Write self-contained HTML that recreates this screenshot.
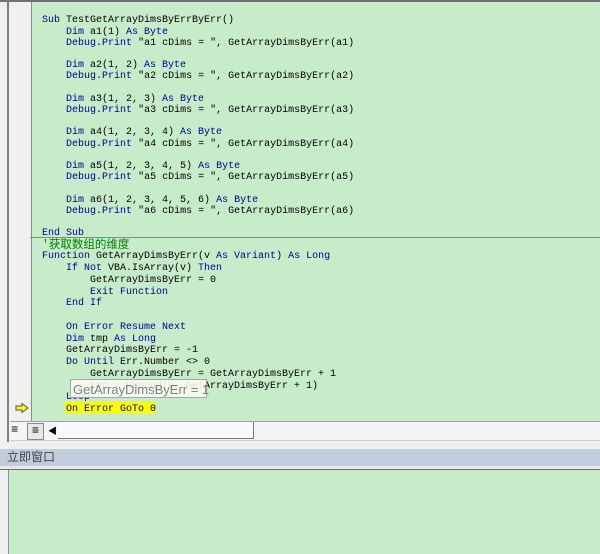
<!DOCTYPE html>
<html><head><meta charset="utf-8"><style>
body{margin:0;width:600px;height:554px;overflow:hidden;background:#f0f0f0;position:relative;font-family:"Liberation Mono","Noto Sans CJK SC",monospace}
.abs{position:absolute}
#code{left:32px;top:2px;width:568px;height:419px;background:#c7ecca}
#margin{left:10px;top:2px;width:21px;height:419px;background:#f0f0f0;border-right:1px solid #8a8a8a}
pre{margin:0;position:absolute;left:42px;font-size:10px;color:#000;font-family:"Liberation Mono","Noto Sans CJK SC",monospace;letter-spacing:0}
#p1{top:15.4px;line-height:11.2px}
#p2{top:239.5px;line-height:11.77px}
.k{color:#00008b}.s{color:#550055}.c{color:#008000;font-size:11.5px;display:inline-block;height:11.77px;line-height:11.77px;vertical-align:top;overflow:visible}
.hl{background:#ffff00}
</style></head><body>
<div class="abs" style="left:0;top:0;width:600px;height:2px;background:#707070"></div>
<div class="abs" style="left:7px;top:0;width:2px;height:442px;background:#808080"></div>
<div class="abs" id="margin"></div>
<div class="abs" id="code"></div>
<div class="abs" style="left:30px;top:237px;width:570px;height:1px;background:#8a8a8a"></div>
<div class="abs hl" style="left:65px;top:402px;width:90px;height:12px"></div>
<pre id="p1"><span class="k">Sub</span> TestGetArrayDimsByErrByErr()
    <span class="k">Dim</span> a1(1) <span class="k">As Byte</span>
    <span class="k">Debug</span>.<span class="k">Print</span> "a1 cDims = ", GetArrayDimsByErr(a1)

    <span class="k">Dim</span> a2(1, 2) <span class="k">As Byte</span>
    <span class="k">Debug</span>.<span class="k">Print</span> "a2 cDims = ", GetArrayDimsByErr(a2)

    <span class="k">Dim</span> a3(1, 2, 3) <span class="k">As Byte</span>
    <span class="k">Debug</span>.<span class="k">Print</span> "a3 cDims = ", GetArrayDimsByErr(a3)

    <span class="k">Dim</span> a4(1, 2, 3, 4) <span class="k">As Byte</span>
    <span class="k">Debug</span>.<span class="k">Print</span> "a4 cDims = ", GetArrayDimsByErr(a4)

    <span class="k">Dim</span> a5(1, 2, 3, 4, 5) <span class="k">As Byte</span>
    <span class="k">Debug</span>.<span class="k">Print</span> "a5 cDims = ", GetArrayDimsByErr(a5)

    <span class="k">Dim</span> a6(1, 2, 3, 4, 5, 6) <span class="k">As Byte</span>
    <span class="k">Debug</span>.<span class="k">Print</span> "a6 cDims = ", GetArrayDimsByErr(a6)

<span class="k">End Sub</span></pre>
<pre id="p2"><span class="c">'获取数组的维度</span>
<span class="k">Function</span> GetArrayDimsByErr(v <span class="k">As Variant</span>) <span class="k">As Long</span>
    <span class="k">If Not</span> VBA.IsArray(v) <span class="k">Then</span>
        GetArrayDimsByErr = 0
        <span class="k">Exit Function</span>
    <span class="k">End If</span>

    <span class="k">On Error Resume Next</span>
    <span class="k">Dim</span> tmp <span class="k">As Long</span>
    GetArrayDimsByErr = -1
    <span class="k">Do Until</span> Err.Number &lt;&gt; 0
        GetArrayDimsByErr = GetArrayDimsByErr + 1
        tmp = UBound(v, GetArrayDimsByErr + 1)
    <span class="k">Loop</span>
    <span class="k">On Error GoTo</span> 0</pre>
<div class="abs" style="left:70px;top:379px;width:137px;height:19px;background:#fbfbf3;border:1px solid #a0a0a0;font:13px 'Liberation Sans',sans-serif;color:#777;line-height:19px;padding-left:2px;box-sizing:border-box;opacity:.9;white-space:nowrap">GetArrayDimsByErr = 1</div>
<svg class="abs" style="left:15px;top:403px" width="14" height="10"><path d="M1 3h6V0.5L13 5 7 9.5V7H1z" fill="#ffff00" stroke="#555" stroke-width="1"/></svg>
<div class="abs" style="left:10px;top:421px;width:590px;height:1px;background:#a0a0a0"></div>
<div class="abs" style="left:10px;top:422px;width:590px;height:18px;background:#f4f4f4"></div>
<div class="abs" style="left:11px;top:424px;font-size:12px;line-height:12px">&#8801;</div>
<div class="abs" style="left:27px;top:423px;width:15px;height:15px;border:1px solid #888;background:#e8e8e8;font-size:12px;line-height:14px;text-align:center">&#8801;</div>
<div class="abs" style="left:48px;top:424px;font-size:9px">&#9664;</div>
<div class="abs" style="left:58px;top:422px;width:195px;height:16px;background:#f9f9f9;border-right:1px solid #777;border-bottom:1px solid #777"></div>
<div class="abs" style="left:10px;top:440px;width:590px;height:8px;background:#eeeeee;border-top:1px solid #ccc"></div>
<div class="abs" style="left:0;top:449px;width:600px;height:17px;background:#bfcddc;font:12px 'Liberation Sans','Noto Sans CJK SC',sans-serif;color:#444;line-height:17px;padding-left:7px;box-sizing:border-box">立即窗口</div>
<div class="abs" style="left:0;top:466px;width:600px;height:3px;background:#e8e8e8;border-bottom:1px solid #707070"></div>
<div class="abs" style="left:8px;top:470px;width:592px;height:84px;background:#c7ecca;border-left:1px solid #909090"></div>
</body></html>
